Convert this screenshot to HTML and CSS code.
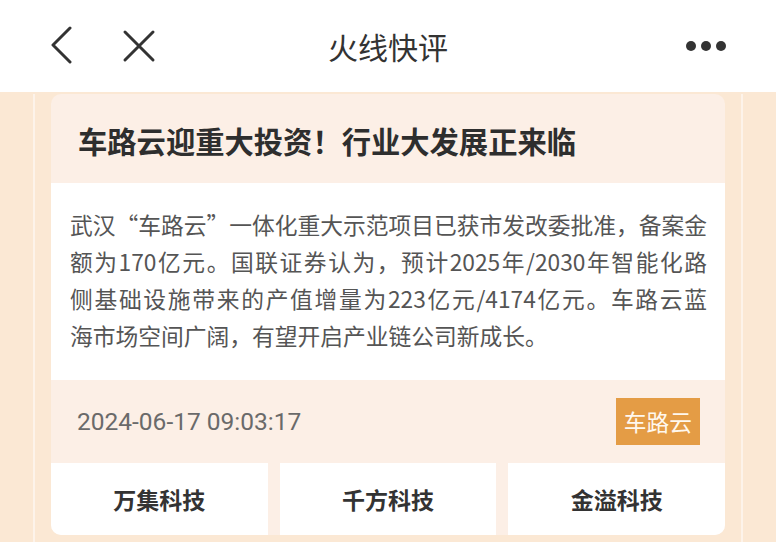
FILE: index.html
```html
<!DOCTYPE html>
<html lang="zh-CN">
<head>
<meta charset="utf-8">
<title>火线快评</title>
<link rel="stylesheet" href="styles.css">
</head>
<body>
<header class="topbar">
  <div class="nav-left">
    <svg class="icon-back" width="24" height="40" viewBox="0 0 24 40"><polyline points="20,2 3,19 20,36" fill="none" stroke="#333" stroke-width="3" stroke-linecap="round" stroke-linejoin="round"/></svg>
    <svg class="icon-close" width="34" height="34" viewBox="0 0 34 34"><path d="M3 3 L31 31 M31 3 L3 31" fill="none" stroke="#333" stroke-width="3" stroke-linecap="round"/></svg>
  </div>
  <h1 class="topbar-title">火线快评</h1>
  <div class="nav-right">
    <span class="dot"></span><span class="dot"></span><span class="dot"></span>
  </div>
</header>
<main class="main">
  <div class="frame">
    <article class="card">
      <h2 class="card-title">车路云迎重大投资！行业大发展正来临</h2>
      <p class="card-body"><span class="ln">武汉“车路云”一体化重大示范项目已获市发改委批准，备案金</span><span class="ln">额为170亿元。国联证券认为，预计2025年/2030年智能化路</span><span class="ln">侧基础设施带来的产值增量为223亿元/4174亿元。车路云蓝</span><span class="ln last">海市场空间广阔，有望开启产业链公司新成长。</span></p>
      <div class="card-meta">
        <span class="date">2024-06-17 09:03:17</span>
        <span class="tag">车路云</span>
      </div>
      <div class="stocks">
        <div class="stock">万集科技</div>
        <div class="stock">千方科技</div>
        <div class="stock">金溢科技</div>
      </div>
    </article>
  </div>
</main>
</body>
</html>
```

FILE: styles.css
```css
* { box-sizing: border-box; }
html, body { margin: 0; padding: 0; }
body {
  width: 776px;
  height: 542px;
  overflow: hidden;
  background: #fbe8d4;
  font-family: "Noto Sans CJK SC", sans-serif;
}
.topbar {
  height: 92px;
  background: #ffffff;
  display: grid;
  grid-template-columns: 1fr auto 1fr;
  align-items: center;
}
.nav-left {
  display: flex;
  align-items: center;
  padding-left: 50px;
  gap: 48px;
}
.icon-back { display: block; }
.icon-close { display: block; }
.topbar-title {
  margin: 0;
  font-family: "Noto Sans CJK SC", sans-serif;
  font-weight: 400;
  font-size: 30px;
  color: #333;
  line-height: 40px;
}
.nav-right {
  display: flex;
  justify-content: flex-end;
  align-items: center;
  gap: 5px;
  padding-right: 50px;
}
.dot {
  width: 10px;
  height: 10px;
  border-radius: 50%;
  background: #333;
}
.main {
  padding-top: 2px;
  height: 450px;
}
.frame {
  margin: 0 33px;
  height: 100%;
  border-left: 2px solid #fdf3ea;
  border-right: 2px solid #fdf3ea;
  padding: 0 16px;
}
.card {
  background: #fcefe6;
  border-radius: 10px;
  overflow: hidden;
}
.card-title {
  margin: 0;
  height: 89px;
  padding: 28px 27px 0;
  font-family: "Noto Sans CJK SC", sans-serif;
  font-weight: 700;
  font-size: 29.3px;
  line-height: 36px;
  color: #2e2e2e;
}
.card-body {
  margin: 0;
  background: #ffffff;
  padding: 23px 18px 26px 19px;
  font-family: "Noto Sans CJK SC", sans-serif;
  font-size: 22.75px;
  line-height: 37px;
  color: #555;
}
.ln {
  display: block;
  text-align: justify;
  text-align-last: justify;
  white-space: nowrap;
}
.ln.last {
  text-align: left;
  text-align-last: left;
}
.card-meta {
  height: 83px;
  display: flex;
  justify-content: space-between;
  align-items: center;
  padding: 0 25px 0 26px;
}
.date {
  font-family: Roboto, sans-serif;
  font-size: 24.5px;
  color: #6a6a6a;
}
.tag {
  background: #e49c45;
  color: #fff8ee;
  font-family: "Noto Sans CJK SC", sans-serif;
  font-size: 22.75px;
  line-height: 47px;
  padding: 0 8px;
}
.stocks {
  display: grid;
  grid-template-columns: repeat(3, 1fr);
  gap: 12px;
}
.stock {
  background: #ffffff;
  height: 72px;
  display: flex;
  align-items: center;
  justify-content: center;
  font-family: "Noto Sans CJK SC", sans-serif;
  font-weight: 700;
  font-size: 23px;
  color: #333;
}
```
